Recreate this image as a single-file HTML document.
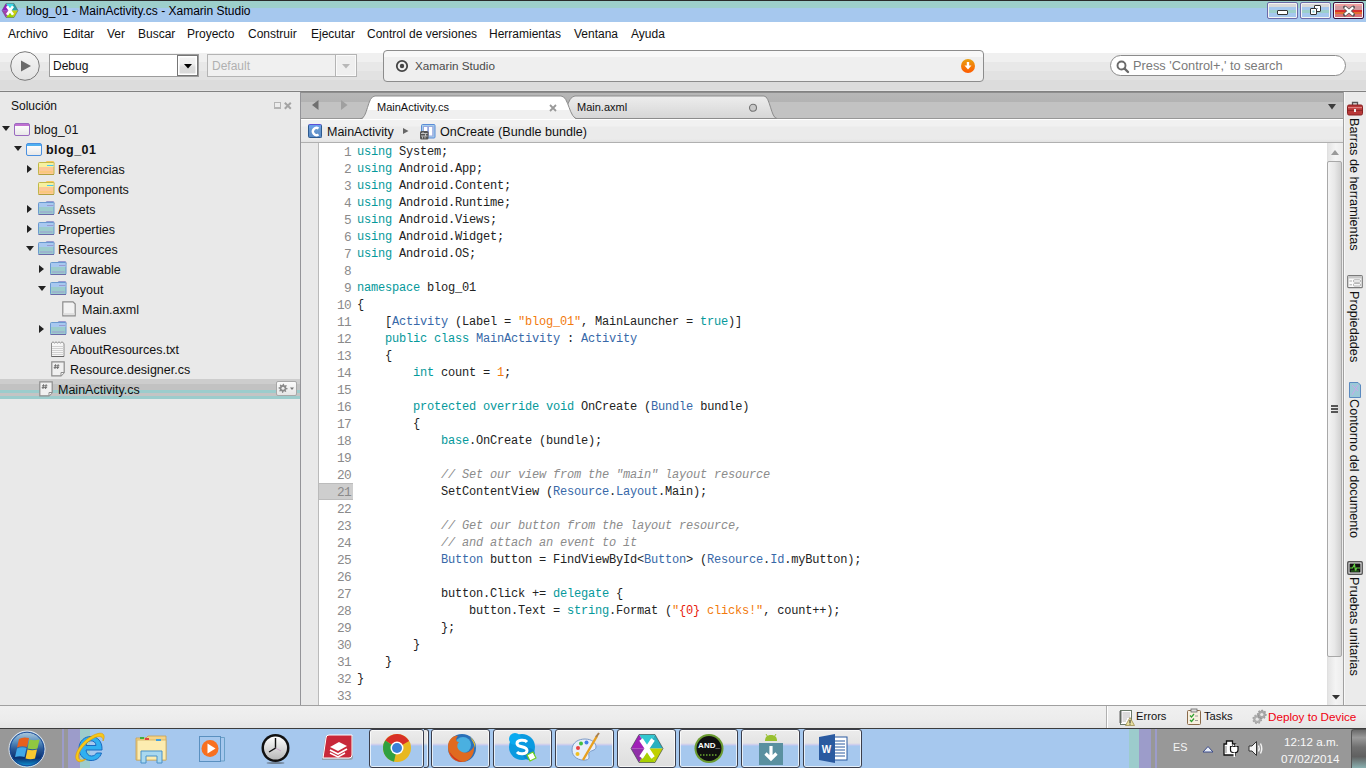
<!DOCTYPE html>
<html><head><meta charset="utf-8">
<style>
*{margin:0;padding:0;box-sizing:border-box}
html,body{width:1366px;height:768px;overflow:hidden;background:#e9e9e9;font-family:"Liberation Sans",sans-serif;font-size:12px;color:#111}
b{font-weight:normal}
.a{position:absolute}
.t{position:absolute;white-space:pre;line-height:1}
svg{position:absolute;overflow:visible}
/* title */
#title{left:0;top:0;width:1366px;height:22px;background:#a6c8ee;border-top:1px solid #2a2a2a}
.wb{position:absolute;top:1px;height:17px;border:1px solid #6b6aa8;border-radius:2px;overflow:hidden;box-shadow:inset 0 0 0 1px #f4f4f4}
/* menu */
#menu{left:0;top:22px;width:1366px;height:30px;background:#fff}
/* toolbar */
#tb{left:0;top:52px;width:1366px;height:40px;background:linear-gradient(#fff 0,#fff 1px,#f0f0f0 1px,#f0f0f0 9.5px,#e8e8e8 9.5px,#e8e8e8 19px,#e2e2e2 19px,#e2e2e2 28px,#dcdcdc 28px,#dcdcdc 38px,#e4e4e4 38px);border-bottom:1px solid #828282}
/* left panel */
#lp{left:0;top:92px;width:301px;height:613px;background:#e9e9e9;border-right:1px solid #949498}
#lp .t{font-size:12.5px}
/* editor */
#ed{left:301px;top:92px;width:1043px;height:613px;background:#fff;border-right:1px solid #a0a0a0}
#tabs{left:0;top:0;width:1042px;height:27px;background:linear-gradient(#b8b8b8 0,#b3b3b3 10px,#c2c2c2 10px,#c2c2c2 100%)}
#crumb{left:0;top:27px;width:1042px;height:24px;background:linear-gradient(#fff 0,#fff 1px,#f1f1f1 1px,#f1f1f1 7px,#ebebeb 8px,#ebebeb 20px,#e2e2e2 23px);border-bottom:1px solid #b0b0b0}
#gut{left:0;top:51px;width:18px;height:562px;background:#e9e9e9;border-right:1px solid #bababa}
.code{position:absolute;font-family:"Liberation Mono",monospace;font-size:12px;letter-spacing:-0.2px;line-height:17px;white-space:pre;color:#222}
.nums{position:absolute;text-align:right;font-family:"Liberation Mono",monospace;font-size:12.8px;letter-spacing:-0.68px;line-height:17px;white-space:pre;color:#8a8a8a}
.k{color:#05999b}.ty{color:#3768a8}.s{color:#f27a0c}.c{color:#8c8c8c;font-style:italic}.r{color:#e8200c}
/* right dock */
#rd{left:1344px;top:92px;width:22px;height:613px;background:#ebebeb}
.vt{position:absolute;white-space:pre;transform-origin:0 0;transform:rotate(90deg);font-size:12px;line-height:1;color:#111}
/* status */
#sb{left:0;top:705px;width:1366px;height:24px;background:linear-gradient(#f0f0f0,#ececec 60%,#e4e4e4);border-top:1px solid #a0a0a0;border-bottom:1px solid #3c3c3c}
/* taskbar */
#task{left:0;top:729px;width:1366px;height:39px;background:#a6c8ee}
.tbtn{position:absolute;top:0;width:59px;height:39px;border:1px solid #7d82a0;border-bottom:none;border-radius:3px 3px 0 0;background:linear-gradient(#e6eaf4,#bcd3ef 40%,#a6c8ee);box-shadow:inset 0 0 0 1px rgba(255,255,255,.5)}
</style></head><body>

<!-- TITLE BAR -->
<div id="title" class="a">
  <div class="a" style="left:0;top:0;width:1366px;height:7px;background:#9dcfcb"></div>
  <svg style="left:2px;top:2px" width="16" height="15" viewBox="0 0 16 15">
    <polygon points="4,0.5 12,0.5 8,7.5" fill="#38d8e8"/>
    <polygon points="12,0.5 16,7.5 8,7.5" fill="#28a0a8"/>
    <polygon points="16,7.5 12,14.5 8,7.5" fill="#c8d010"/>
    <polygon points="12,14.5 4,14.5 8,7.5" fill="#98d400"/>
    <polygon points="4,14.5 0,7.5 8,7.5" fill="#a040b0"/>
    <polygon points="0,7.5 4,0.5 8,7.5" fill="#9020c0"/>
    <polygon points="4,0.5 12,0.5 16,7.5 12,14.5 4,14.5 0,7.5" fill="none" stroke="#404040" stroke-width="0.7" opacity="0.55"/>
    <path d="M5,3.2 L11,11.8 M11,3.2 L5,11.8" stroke="#fff" stroke-width="2.6"/>
  </svg>
  <span class="t" style="left:26px;top:4px;font-size:12px;color:#000">blog_01 - MainActivity.cs - Xamarin Studio</span>
  <div class="wb" style="left:1267px;width:31px;background:linear-gradient(#d9d9d9 0,#d9d9d9 4px,#a6c8ee 4px,#a6c8ee 7px,#9dcfcb 7px,#9dcfcb 10px,#a6c8ee 10px)">
    <div class="a" style="left:9px;top:7px;width:11px;height:5px;background:#fff;border:1px solid #333;border-radius:1px"></div>
  </div>
  <div class="wb" style="left:1300px;width:31px;background:linear-gradient(#d9d9d9 0,#d9d9d9 4px,#a6c8ee 4px,#a6c8ee 7px,#9dcfcb 7px,#9dcfcb 10px,#a6c8ee 10px)">
    <div class="a" style="left:13px;top:2px;width:7px;height:7px;background:#fff;border:1px solid #333;border-radius:1px;box-shadow:inset 0 0 0 2px #fff,inset 0 0 0 3px #88aacc"></div>
    <div class="a" style="left:9px;top:5px;width:7px;height:7px;background:#fff;border:1px solid #333;border-radius:1px;box-shadow:inset 0 0 0 1.5px #fff,inset 0 0 0 3px #88ccd0"></div>
  </div>
  <div class="wb" style="left:1333px;width:31px;border-color:#3a1040;background:linear-gradient(#f0a0a0 0,#f0a0a0 3px,#d09aa0 3px,#d09aa0 7px,#d83030 7px,#d83030 9px,#e07030 9px,#e07030 11.5px,#d87078 11.5px)">
    <svg style="left:9px;top:3px" width="12" height="10" viewBox="0 0 12 10"><path d="M1.8,1.3 L10.2,8.7 M10.2,1.3 L1.8,8.7" stroke="#555" stroke-width="3.6" stroke-linecap="round"/><path d="M1.8,1.3 L10.2,8.7 M10.2,1.3 L1.8,8.7" stroke="#fff" stroke-width="2.2"/></svg>
  </div>
</div>

<!-- MENU -->
<div id="menu" class="a">
  <span class="t" style="left:8px;top:6px">Archivo</span>
  <span class="t" style="left:63px;top:6px">Editar</span>
  <span class="t" style="left:107px;top:6px">Ver</span>
  <span class="t" style="left:138px;top:6px">Buscar</span>
  <span class="t" style="left:187px;top:6px">Proyecto</span>
  <span class="t" style="left:248px;top:6px">Construir</span>
  <span class="t" style="left:311px;top:6px">Ejecutar</span>
  <span class="t" style="left:367px;top:6px">Control de versiones</span>
  <span class="t" style="left:489px;top:6px">Herramientas</span>
  <span class="t" style="left:574px;top:6px">Ventana</span>
  <span class="t" style="left:631px;top:6px">Ayuda</span>
</div>

<!-- TOOLBAR -->
<div id="tb" class="a">
  <svg style="left:10px;top:-1px" width="30" height="30" viewBox="0 0 30 30">
    <defs><linearGradient id="pg" x1="0" y1="0" x2="0" y2="1"><stop offset="0" stop-color="#f6f6f6"/><stop offset="1" stop-color="#e2e2e2"/></linearGradient></defs>
    <circle cx="15" cy="15" r="14.3" fill="url(#pg)" stroke="#7a7a7a" stroke-width="1"/>
    <polygon points="11,9.5 21,15 11,20.5" fill="#6a6a6a"/>
  </svg>
  <!-- Debug combo -->
  <div class="a" style="left:49px;top:2px;width:150px;height:23px;background:#fff;border:1px solid #9c9c9c"></div>
  <div class="a" style="left:177px;top:3px;width:21px;height:21px;background:linear-gradient(#f2f2f2,#f0f0f0 40%,#dcdcdc 60%,#d8d8d8);border:1.5px solid #767676;box-shadow:inset 0 0 0 1.5px #fff"></div>
  <svg style="left:184px;top:12px" width="8" height="5"><polygon points="0,0 8,0 4,4.5" fill="#000"/></svg>
  <span class="t" style="left:53px;top:8px;font-size:12px;color:#111">Debug</span>
  <!-- Default combo -->
  <div class="a" style="left:207px;top:2px;width:150px;height:23px;background:#f0f0f0;border:1px solid #b4b4b4"></div>
  <div class="a" style="left:335px;top:2px;width:22px;height:23px;background:#efefef;border:1px solid #b4b4b4;box-shadow:inset 0 0 0 1px #fafafa"></div>
  <svg style="left:342px;top:12px" width="8" height="5"><polygon points="0,0 8,0 4,4.5" fill="#b8b8b8"/></svg>
  <span class="t" style="left:212px;top:8px;font-size:12px;color:#b0b0b0">Default</span>
  <!-- status box -->
  <div class="a" style="left:383px;top:-2px;width:601px;height:32px;background:linear-gradient(#f8f8f8 0,#f8f8f8 6px,#efefef 6px,#efefef 100%);border:1px solid #8c8c8c;border-radius:4px"></div>
  <svg style="left:395px;top:7px" width="14" height="14" viewBox="0 0 14 14"><circle cx="7" cy="7" r="5.2" fill="none" stroke="#444" stroke-width="1.8"/><circle cx="7" cy="7" r="2.2" fill="#444"/></svg>
  <span class="t" style="left:415px;top:8px;font-size:11.7px;color:#4a4a4a">Xamarin Studio</span>
  <svg style="left:961px;top:7px" width="14" height="14" viewBox="0 0 14 14"><defs><linearGradient id="og" x1="0" y1="0" x2="0" y2="1"><stop offset="0" stop-color="#e8a010"/><stop offset="1" stop-color="#ff5a00"/></linearGradient></defs><circle cx="7" cy="7" r="7" fill="url(#og)"/><path d="M5.8,3 H8.2 V6.5 H10.5 L7,10.5 L3.5,6.5 H5.8 Z" fill="#fff"/></svg>
  <!-- search -->
  <div class="a" style="left:1110px;top:3px;width:236px;height:21px;background:#fff;border:1px solid #8c8c8c;border-radius:11px"></div>
  <svg style="left:1116px;top:8px" width="14" height="14" viewBox="0 0 14 14"><circle cx="5.5" cy="5.5" r="4" fill="none" stroke="#6a6a6a" stroke-width="1.9"/><path d="M8.5,8.5 L12,12" stroke="#6a6a6a" stroke-width="2.4" stroke-linecap="round"/></svg>
  <span class="t" style="left:1133px;top:8px;font-size:12.8px;color:#7a7a7a">Press 'Control+,' to search</span>
</div>

<!-- LEFT PANEL -->
<div id="lp" class="a">
  <span class="t" style="left:11px;top:8px;font-size:12px">Solución</span>
  <div class="a" style="left:274px;top:10px;width:7px;height:7px;border:1px solid #b4b4b4;border-bottom-width:2px;background:#ececec"></div>
  <svg style="left:284px;top:10px" width="8" height="8"><path d="M0.8,0.8 L6.8,6.8 M6.8,0.8 L0.8,6.8" stroke="#a4a4a4" stroke-width="2"/></svg>
<div class="a" style="left:0;top:287px;width:300px;height:20px;background:linear-gradient(#cdcdcd 0,#cdcdcd 5px,#c2c2c2 5px,#c2c2c2 11px,#9ccccc 11px,#9ccccc 14px,#c4c4c4 14px,#c4c4c4 17px,#9ccccc 17px,#9ccccc 20px)"></div>
<div class="a" style="left:276px;top:289px;width:21px;height:15px;background:linear-gradient(#fafafa,#e6e6e6);border:1px solid #a8a8a8;border-radius:2px"></div>
<svg style="left:278px;top:291px" width="18" height="11" viewBox="0 0 18 11"><path d="M9.6,5.3 L9.5,6.2 L8.0,6.6 L7.7,7.1 L8.3,8.6 L7.6,9.1 L6.3,8.3 L5.6,8.5 L5.0,9.9 L4.1,9.8 L3.7,8.3 L3.2,8.0 L1.7,8.6 L1.2,7.9 L2.0,6.6 L1.8,5.9 L0.4,5.3 L0.5,4.4 L2.0,4.0 L2.3,3.5 L1.7,2.0 L2.4,1.5 L3.7,2.3 L4.4,2.1 L5.0,0.7 L5.9,0.8 L6.3,2.3 L6.8,2.6 L8.3,2.0 L8.8,2.7 L8.0,4.0 L8.2,4.7 Z" fill="#8a8a8a"/><circle cx="5" cy="5.3" r="1.5" fill="#eee"/><polygon points="12,4.5 16,4.5 14,7" fill="#777"/></svg>
<svg style="left:2px;top:34px" width="8" height="5"><polygon points="0,0 8,0 4,5" fill="#222"/></svg>
<div class="a" style="left:14px;top:31px;width:16px;height:13px;border:1px solid #9a6ac0;border-radius:2px;background:linear-gradient(#c070d0 0,#c070d0 2px,#fdfdfd 2px,#e8e8e8 100%)"></div>
<span class="t" style="left:34px;top:32px;">blog_01</span>
<svg style="left:14px;top:54px" width="8" height="5"><polygon points="0,0 8,0 4,5" fill="#222"/></svg>
<div class="a" style="left:26px;top:51px;width:16px;height:13px;border:1px solid #4a90e0;border-radius:2px;background:linear-gradient(#50b0f0 0,#50b0f0 2px,#fdfdfd 2px,#e8e8e8 100%)"></div>
<span class="t" style="left:46px;top:52px;font-weight:bold;letter-spacing:0.45px;">blog_01</span>
<svg style="left:27px;top:73px" width="5" height="8"><polygon points="0,0 5,4 0,8" fill="#222"/></svg>
<svg style="left:38px;top:69px" width="17" height="15" viewBox="0 0 17 15"><rect x="8" y="0.5" width="8" height="3" rx="1" fill="#f0e898" stroke="#f8c860" stroke-width="1"/><rect x="0.5" y="1.5" width="15.5" height="12" rx="1" fill="#fcc898" stroke="#c0b848" stroke-width="1"/><rect x="1" y="2" width="14.5" height="4" fill="#f6f0a0"/><path d="M9,4.5 H15.5" stroke="#48c8f0" stroke-width="1"/><path d="M2,11 H14.5" stroke="#f8c860" stroke-width="1"/><path d="M0.5,13.5 H16" stroke="#b0a040" stroke-width="1"/></svg>
<span class="t" style="left:58px;top:72px;">Referencias</span>
<svg style="left:38px;top:89px" width="17" height="15" viewBox="0 0 17 15"><rect x="8" y="0.5" width="8" height="3" rx="1" fill="#f0e898" stroke="#f8c860" stroke-width="1"/><rect x="0.5" y="1.5" width="15.5" height="12" rx="1" fill="#fcc898" stroke="#c0b848" stroke-width="1"/><rect x="1" y="2" width="14.5" height="4" fill="#f6f0a0"/><path d="M9,4.5 H15.5" stroke="#48c8f0" stroke-width="1"/><path d="M2,11 H14.5" stroke="#f8c860" stroke-width="1"/><path d="M0.5,13.5 H16" stroke="#b0a040" stroke-width="1"/></svg>
<span class="t" style="left:58px;top:92px;">Components</span>
<svg style="left:27px;top:113px" width="5" height="8"><polygon points="0,0 5,4 0,8" fill="#222"/></svg>
<svg style="left:38px;top:109px" width="17" height="15" viewBox="0 0 17 15"><rect x="8" y="0.5" width="8" height="3" rx="1" fill="#a8c8f0" stroke="#9a9ad0" stroke-width="1"/><rect x="0.5" y="1.5" width="15.5" height="12" rx="1" fill="#9ccccc" stroke="#6a9ad0" stroke-width="1"/><rect x="1" y="2" width="14.5" height="4" fill="#a8c8f0"/><path d="M9,4.5 H15.5" stroke="#9a9ad0" stroke-width="1"/><path d="M2,11 H14.5" stroke="#9a9ad0" stroke-width="1"/><path d="M0.5,13.5 H16" stroke="#6a6aa8" stroke-width="1"/></svg>
<span class="t" style="left:58px;top:112px;">Assets</span>
<svg style="left:27px;top:133px" width="5" height="8"><polygon points="0,0 5,4 0,8" fill="#222"/></svg>
<svg style="left:38px;top:129px" width="17" height="15" viewBox="0 0 17 15"><rect x="8" y="0.5" width="8" height="3" rx="1" fill="#a8c8f0" stroke="#9a9ad0" stroke-width="1"/><rect x="0.5" y="1.5" width="15.5" height="12" rx="1" fill="#9ccccc" stroke="#6a9ad0" stroke-width="1"/><rect x="1" y="2" width="14.5" height="4" fill="#a8c8f0"/><path d="M9,4.5 H15.5" stroke="#9a9ad0" stroke-width="1"/><path d="M2,11 H14.5" stroke="#9a9ad0" stroke-width="1"/><path d="M0.5,13.5 H16" stroke="#6a6aa8" stroke-width="1"/></svg>
<span class="t" style="left:58px;top:132px;">Properties</span>
<svg style="left:26px;top:154px" width="8" height="5"><polygon points="0,0 8,0 4,5" fill="#222"/></svg>
<svg style="left:38px;top:149px" width="17" height="15" viewBox="0 0 17 15"><rect x="8" y="0.5" width="8" height="3" rx="1" fill="#a8c8f0" stroke="#9a9ad0" stroke-width="1"/><rect x="0.5" y="1.5" width="15.5" height="12" rx="1" fill="#9ccccc" stroke="#6a9ad0" stroke-width="1"/><rect x="1" y="2" width="14.5" height="4" fill="#a8c8f0"/><path d="M9,4.5 H15.5" stroke="#9a9ad0" stroke-width="1"/><path d="M2,11 H14.5" stroke="#9a9ad0" stroke-width="1"/><path d="M0.5,13.5 H16" stroke="#6a6aa8" stroke-width="1"/></svg>
<span class="t" style="left:58px;top:152px;">Resources</span>
<svg style="left:39px;top:173px" width="5" height="8"><polygon points="0,0 5,4 0,8" fill="#222"/></svg>
<svg style="left:50px;top:169px" width="17" height="15" viewBox="0 0 17 15"><rect x="8" y="0.5" width="8" height="3" rx="1" fill="#a8c8f0" stroke="#9a9ad0" stroke-width="1"/><rect x="0.5" y="1.5" width="15.5" height="12" rx="1" fill="#9ccccc" stroke="#6a9ad0" stroke-width="1"/><rect x="1" y="2" width="14.5" height="4" fill="#a8c8f0"/><path d="M9,4.5 H15.5" stroke="#9a9ad0" stroke-width="1"/><path d="M2,11 H14.5" stroke="#9a9ad0" stroke-width="1"/><path d="M0.5,13.5 H16" stroke="#6a6aa8" stroke-width="1"/></svg>
<span class="t" style="left:70px;top:172px;">drawable</span>
<svg style="left:38px;top:194px" width="8" height="5"><polygon points="0,0 8,0 4,5" fill="#222"/></svg>
<svg style="left:50px;top:189px" width="17" height="15" viewBox="0 0 17 15"><rect x="8" y="0.5" width="8" height="3" rx="1" fill="#a8c8f0" stroke="#9a9ad0" stroke-width="1"/><rect x="0.5" y="1.5" width="15.5" height="12" rx="1" fill="#9ccccc" stroke="#6a9ad0" stroke-width="1"/><rect x="1" y="2" width="14.5" height="4" fill="#a8c8f0"/><path d="M9,4.5 H15.5" stroke="#9a9ad0" stroke-width="1"/><path d="M2,11 H14.5" stroke="#9a9ad0" stroke-width="1"/><path d="M0.5,13.5 H16" stroke="#6a6aa8" stroke-width="1"/></svg>
<span class="t" style="left:70px;top:192px;">layout</span>
<svg style="left:62px;top:209px" width="15" height="16" viewBox="0 0 15 16"><path d="M0.8,0.8 H11 L13.2,3 V14.8 H0.8 Z" fill="#f2f2f2" stroke="#8c8c8c" stroke-width="1.2"/><path d="M1.5,13 H12.5" stroke="#e0e0e0" stroke-width="2"/></svg>
<span class="t" style="left:82px;top:212px;">Main.axml</span>
<svg style="left:39px;top:233px" width="5" height="8"><polygon points="0,0 5,4 0,8" fill="#222"/></svg>
<svg style="left:50px;top:229px" width="17" height="15" viewBox="0 0 17 15"><rect x="8" y="0.5" width="8" height="3" rx="1" fill="#a8c8f0" stroke="#9a9ad0" stroke-width="1"/><rect x="0.5" y="1.5" width="15.5" height="12" rx="1" fill="#9ccccc" stroke="#6a9ad0" stroke-width="1"/><rect x="1" y="2" width="14.5" height="4" fill="#a8c8f0"/><path d="M9,4.5 H15.5" stroke="#9a9ad0" stroke-width="1"/><path d="M2,11 H14.5" stroke="#9a9ad0" stroke-width="1"/><path d="M0.5,13.5 H16" stroke="#6a6aa8" stroke-width="1"/></svg>
<span class="t" style="left:70px;top:232px;">values</span>
<svg style="left:51px;top:249px" width="14" height="16" viewBox="0 0 14 16"><path d="M0.5,2 L2,0.8 L3.5,2 L5,0.8 L6.5,2 L8,0.8 L9.5,2 L11,0.8 L13,2.5 V15.5 H0.5 Z" fill="#f6f6f6" stroke="#8c8c8c" stroke-width="1"/><path d="M1,5.5 H12.5 M1,7.5 H12.5 M1,9.5 H12.5 M1,11.5 H12.5 M1,13.5 H12.5" stroke="#d0d0d0" stroke-width="1"/><path d="M0.5,15.5 H13" stroke="#666" stroke-width="1"/></svg>
<span class="t" style="left:70px;top:252px;">AboutResources.txt</span>
<svg style="left:51px;top:269px" width="15" height="16" viewBox="0 0 15 16"><path d="M0.8,0.8 H13.2 V11.5 L10,14.8 H0.8 Z" fill="#f0f0f0" stroke="#8c8c8c" stroke-width="1.2"/><path d="M10,14.5 V11.5 H13" fill="#fff" stroke="#8c8c8c" stroke-width="1"/><path d="M4.6,3.2 L3.9,8 M7.2,3.2 L6.5,8 M3,4.8 H8.4 M2.7,6.6 H8.1" stroke="#6a6a6a" stroke-width="0.9"/></svg>
<span class="t" style="left:70px;top:272px;">Resource.designer.cs</span>
<svg style="left:39px;top:289px" width="15" height="16" viewBox="0 0 15 16"><path d="M0.8,0.8 H13.2 V11.5 L10,14.8 H0.8 Z" fill="#f0f0f0" stroke="#8c8c8c" stroke-width="1.2"/><path d="M10,14.5 V11.5 H13" fill="#fff" stroke="#8c8c8c" stroke-width="1"/><path d="M4.6,3.2 L3.9,8 M7.2,3.2 L6.5,8 M3,4.8 H8.4 M2.7,6.6 H8.1" stroke="#6a6a6a" stroke-width="0.9"/></svg>
<span class="t" style="left:58px;top:292px;">MainActivity.cs</span>
</div>

<!-- EDITOR -->
<div id="ed" class="a">
  <div id="tabs" class="a">

    <div class="a" style="left:0;top:0;width:1042px;height:1px;background:#8e8e8e"></div>
    <svg style="left:11px;top:8px" width="7" height="10"><polygon points="6.5,0 6.5,10 0,5" fill="#707070"/></svg>
    <svg style="left:40px;top:8px" width="7" height="10"><polygon points="0,0 0,10 6.5,5" fill="#a0a0a0"/></svg>
    <div class="a" style="left:0;top:26px;width:1042px;height:1px;background:#979797"></div>
    <svg style="left:0;top:0" width="1042" height="27" viewBox="0 0 1042 27">
      <defs>
        <linearGradient id="tgi" x1="0" y1="0" x2="0" y2="1"><stop offset="0" stop-color="#ededed"/><stop offset="1" stop-color="#d6d6d6"/></linearGradient>
        <linearGradient id="tga" x1="0" y1="0" x2="0" y2="1"><stop offset="0" stop-color="#ffffff"/><stop offset="0.62" stop-color="#ffffff"/><stop offset="0.62" stop-color="#f0f0f0"/><stop offset="1" stop-color="#f0f0f0"/></linearGradient>
      </defs>
      <path d="M258,26.5 C265,26.5 266,4 274,4 L463,4 C469,4 470,26.5 476,26.5 Z" fill="url(#tgi)" stroke="#8c8c8c" stroke-width="1"/>
      <path d="M59,27 C67,27 66,4 74,4 L260,4 C268,4 268,27 277,27 Z" fill="url(#tga)" stroke="#8c8c8c" stroke-width="1"/>
      <rect x="62" y="26" width="212" height="2" fill="#f0f0f0"/>
    </svg>
    <span class="t" style="left:76px;top:10px;font-size:11px;color:#111">MainActivity.cs</span>
    <svg style="left:248px;top:12px" width="8" height="8"><path d="M1,1 L7,7 M7,1 L1,7" stroke="#999" stroke-width="1.8"/></svg>
    <span class="t" style="left:276px;top:10px;font-size:11px;color:#111">Main.axml</span>
    <svg style="left:447px;top:11px" width="10" height="10"><circle cx="5" cy="4.8" r="3.5" fill="#c8c8c8" stroke="#747474" stroke-width="1.1"/></svg>
    <svg style="left:1027px;top:12px" width="8" height="6"><polygon points="0,0 8,0 4,5.5" fill="#3c3c3c"/></svg>

  </div>
  <div id="crumb" class="a">
    <div class="a" style="left:7px;top:5px;width:14px;height:14px;background:linear-gradient(#6a9ee8 0,#6a9ee8 3px,#6a9ad0 3px,#5a8cc8);border:1px solid #2d5a90;border-top-color:#5a50d8;border-radius:2px"></div>
    <svg style="left:10px;top:8px" width="9" height="9" viewBox="0 0 9 9"><path d="M7.5,1.5 A3.6,3.6 0 1 0 7.5,7.5" fill="none" stroke="#fff" stroke-width="2.3"/></svg>
    <span class="t" style="left:26px;top:7px;font-size:12.5px">MainActivity</span>
    <svg style="left:102px;top:9px" width="6" height="7"><polygon points="0,0 5.5,3 0,6" fill="#666"/></svg>
    <svg style="left:119px;top:5px" width="16" height="16" viewBox="0 0 16 16">
      <rect x="1.5" y="0.5" width="13.5" height="13.5" rx="1" fill="#a8d0e8" stroke="#5a8ad8" stroke-width="1"/>
      <rect x="3" y="2" width="10.5" height="10.5" fill="#98a8e0"/>
      <rect x="4" y="3" width="3.2" height="8.5" fill="#fff"/><rect x="9" y="3" width="3.2" height="8.5" fill="#fff"/>
      <rect x="0" y="7" width="8.5" height="8.5" rx="1.5" fill="#555"/>
      <path d="M1,9.5 H7.5 M1,12 H7.5 M3,8 V9.5 M5.5,10 V12 M2.5,12.5 V14.5 M5,12.5 V14.5" stroke="#d8d8d8" stroke-width="0.8"/>
    </svg>
    <span class="t" style="left:139px;top:7px;font-size:12.6px">OnCreate (Bundle bundle)</span>
  </div>
  <div id="gut" class="a"></div>
  <div class="a" style="left:18px;top:391px;width:34px;height:17px;background:#cecece;border-top:1px solid #bcbcbc;border-bottom:1px solid #bcbcbc"></div>
  <div class="nums" style="left:18px;top:52px;width:32px">1
2
3
4
5
6
7
8
9
10
11
12
13
14
15
16
17
18
19
20
21
22
23
24
25
26
27
28
29
30
31
32
33</div>
  <div class="code" style="left:56px;top:52px"><b class="k">using</b> System;
<b class="k">using</b> Android.App;
<b class="k">using</b> Android.Content;
<b class="k">using</b> Android.Runtime;
<b class="k">using</b> Android.Views;
<b class="k">using</b> Android.Widget;
<b class="k">using</b> Android.OS;

<b class="k">namespace</b> blog_01
{
    [<b class="ty">Activity</b> (Label = <b class="s">"blog_01"</b>, MainLauncher = <b class="k">true</b>)]
    <b class="k">public</b> <b class="k">class</b> <b class="ty">MainActivity</b> : <b class="ty">Activity</b>
    {
        <b class="k">int</b> count = <b class="s">1</b>;

        <b class="k">protected</b> <b class="k">override</b> <b class="k">void</b> OnCreate (<b class="ty">Bundle</b> bundle)
        {
            <b class="k">base</b>.OnCreate (bundle);

            <b class="c">// Set our view from the "main" layout resource</b>
            SetContentView (<b class="ty">Resource</b>.<b class="ty">Layout</b>.Main);

            <b class="c">// Get our button from the layout resource,</b>
            <b class="c">// and attach an event to it</b>
            <b class="ty">Button</b> button = FindViewById&lt;<b class="ty">Button</b>&gt; (<b class="ty">Resource</b>.<b class="ty">Id</b>.myButton);

            button.Click += <b class="k">delegate</b> {
                button.Text = <b class="k">string</b>.Format (<b class="s">"</b><b class="r">{0}</b><b class="s"> clicks!"</b>, count++);
            };
        }
    }
}
</div>
  <!-- scrollbar -->

  <div class="a" style="left:1026px;top:51px;width:16px;height:562px;background:linear-gradient(90deg,#e4e4e4,#f4f4f4 50%,#ececec);border-left:1px solid #e0e0e0"></div>
  <svg style="left:1030px;top:58px" width="8" height="5"><polygon points="0,5 8,5 4,0" fill="#9a9a9a"/></svg>
  <div class="a" style="left:1026px;top:69px;width:15px;height:496px;background:linear-gradient(90deg,#f4f4f4,#e8e8e8 50%,#d0d0d0);border:1px solid #a8a8a8;border-radius:2px"></div>
  <div class="a" style="left:1030px;top:313px;width:7px;height:1.5px;background:#555"></div>
  <div class="a" style="left:1030px;top:316px;width:7px;height:1.5px;background:#555"></div>
  <div class="a" style="left:1030px;top:319px;width:7px;height:1.5px;background:#555"></div>
  <svg style="left:1031px;top:603px" width="8" height="5"><polygon points="0,0 8,0 4,4.5" fill="#333"/></svg>

</div>

<!-- RIGHT DOCK -->
<div id="rd" class="a">

  <div class="a" style="left:0;top:0;width:1px;height:613px;background:#f8f8f8"></div>
  <svg style="left:3px;top:9px" width="16" height="15" viewBox="0 0 16 15"><path d="M5.5,4 V1.5 H10.5 V4" fill="none" stroke="#555" stroke-width="1.3"/><rect x="0.5" y="4" width="15" height="10" rx="1.5" fill="#b83838" stroke="#882020"/><rect x="1" y="6" width="14" height="1.2" fill="#e08080"/><rect x="1" y="9" width="14" height="1" fill="#902828"/><rect x="7" y="8" width="2" height="3" fill="#eee"/></svg>
  <span class="vt" style="left:15.8px;top:26px;font-size:12.7px">Barras de herramientas</span>
  <svg style="left:3px;top:183px" width="16" height="14" viewBox="0 0 16 14"><rect x="0.7" y="0.7" width="14.6" height="12" rx="1" fill="#fafafa" stroke="#7a7a7a" stroke-width="1.2"/><rect x="1" y="1" width="14" height="2.5" fill="#c8c8c8"/><rect x="6.5" y="4.8" width="7" height="2.4" rx="1" fill="#fff" stroke="#999" stroke-width="0.8"/><rect x="6.5" y="8.6" width="7" height="2.4" rx="1" fill="#fff" stroke="#999" stroke-width="0.8"/><path d="M2.5,6 H5 M2.5,9.8 H5" stroke="#aaa" stroke-width="1"/></svg>
  <span class="vt" style="left:15.8px;top:198.5px;font-size:12.7px">Propiedades</span>
  <svg style="left:5px;top:290px" width="12" height="16" viewBox="0 0 12 16"><path d="M0.5,0.5 H9 L11.5,3 V15.5 H0.5 Z" fill="#9cc8d8" stroke="#5a8ac0"/><path d="M3,3 L9,9 M3,13 L9,3" stroke="#c8a8e8" stroke-width="1"/></svg>
  <span class="vt" style="left:15.8px;top:307px;font-size:12.7px">Contorno del documento</span>
  <svg style="left:3px;top:469px" width="16" height="14" viewBox="0 0 16 14"><rect x="0.8" y="0.8" width="14.4" height="12.4" rx="1" fill="#fff" stroke="#555" stroke-width="1.5"/><rect x="2.5" y="2.5" width="11" height="9" fill="#111"/><path d="M3,7 H5.5 L7.5,3.5 L8.5,10 L9.5,7 H13" fill="none" stroke="#60d040" stroke-width="1.2"/><path d="M4,10 H12" stroke="#308020" stroke-width="1"/></svg>
  <span class="vt" style="left:15.8px;top:485px;font-size:12.7px">Pruebas unitarias</span>

</div>

<!-- STATUS -->
<div id="sb" class="a">

  <div class="a" style="left:1106px;top:0;width:1px;height:22px;background:#b0b0b0"></div>
  <div class="a" style="left:1107px;top:0;width:1px;height:22px;background:#fff"></div>
  <svg style="left:1118px;top:3px" width="17" height="17" viewBox="0 0 17 17"><rect x="2.5" y="1.5" width="11" height="14" fill="#fdfdfd" stroke="#6a7a6a"/><path d="M4.5,4 H12 M4.5,6 H12 M4.5,8 H12 M4.5,10 H9 M4.5,12 H8" stroke="#b8b8b8" stroke-width="1"/><path d="M1,3 H4 M1,5 H4 M1,7 H4 M1,9 H4 M1,11 H4 M1,13 H4" stroke="#555" stroke-width="0.9"/><polygon points="12,8.5 16.5,16.5 7.5,16.5" fill="#e8e0a0" stroke="#a09050" stroke-width="0.8"/><rect x="11.5" y="11" width="1" height="3" fill="#222"/><rect x="11.5" y="14.6" width="1" height="1" fill="#222"/></svg>
  <span class="t" style="left:1136px;top:5px;font-size:11.2px">Errors</span>
  <svg style="left:1187px;top:2px" width="14" height="17" viewBox="0 0 14 17"><rect x="0.5" y="2.5" width="13" height="14" rx="1" fill="#f8f0e0" stroke="#8a6a4a"/><rect x="4" y="1" width="6" height="3" fill="#ddd" stroke="#666" stroke-width="0.8"/><path d="M3,7.5 L4.5,9 L7,6 M3,12 L4.5,13.5 L7,10.5" fill="none" stroke="#30a030" stroke-width="1.2"/><path d="M8,8 H11 M8,12.5 H11" stroke="#888" stroke-width="0.8"/></svg>
  <span class="t" style="left:1204px;top:5px;font-size:11.2px">Tasks</span>
  <svg style="left:1252px;top:3px" width="16" height="16" viewBox="0 0 16 16"><path d="M9.7,11.1 L9.4,12.0 L8.0,12.1 L7.6,12.6 L7.7,14.0 L6.9,14.5 L5.9,13.5 L5.2,13.6 L4.3,14.7 L3.4,14.4 L3.3,13.0 L2.8,12.6 L1.4,12.7 L0.9,11.9 L1.9,10.9 L1.8,10.2 L0.7,9.3 L1.0,8.4 L2.4,8.3 L2.8,7.8 L2.7,6.4 L3.5,5.9 L4.5,6.9 L5.2,6.8 L6.1,5.7 L7.0,6.0 L7.1,7.4 L7.6,7.8 L9.0,7.7 L9.5,8.5 L8.5,9.5 L8.6,10.2 Z" fill="#b0b0b0" stroke="#909090" stroke-width="0.6"/><circle cx="5.2" cy="10.2" r="1.6" fill="#e8e8e8"/><path d="M14.4,5.5 L14.3,6.4 L12.9,6.8 L12.6,7.4 L13.1,8.8 L12.4,9.3 L11.1,8.6 L10.5,8.8 L9.8,10.1 L8.9,10.0 L8.5,8.6 L7.9,8.3 L6.5,8.8 L6.0,8.1 L6.7,6.8 L6.5,6.2 L5.2,5.5 L5.3,4.6 L6.7,4.2 L7.0,3.6 L6.5,2.2 L7.2,1.7 L8.5,2.4 L9.1,2.2 L9.8,0.9 L10.7,1.0 L11.1,2.4 L11.7,2.7 L13.1,2.2 L13.6,2.9 L12.9,4.2 L13.1,4.8 Z" fill="#a8a8a8" stroke="#888" stroke-width="0.6"/><circle cx="9.8" cy="5.5" r="1.6" fill="#e8e8e8"/></svg>
  <span class="t" style="left:1268px;top:5px;font-size:11.7px;color:#f00010">Deploy to Device</span>

</div>

<!-- TASKBAR -->
<div id="task" class="a">
<div class="a" style="left:0;top:0;width:62px;height:39px;background:#989898"></div>
<div class="a" style="left:62px;top:0;width:2px;height:39px;background:#9c9cca"></div>
<div class="a" style="left:64px;top:0;width:4px;height:39px;background:#989898"></div>
<div class="a" style="left:68px;top:0;width:12px;height:39px;background:#9c9cca"></div>
<div class="a" style="left:80px;top:0;width:10px;height:39px;background:#9ccccc"></div>
<div class="a" style="left:1129px;top:0;width:10px;height:39px;background:#9ccccc"></div>
<div class="a" style="left:1139px;top:0;width:12px;height:39px;background:#9c9cca"></div>
<div class="a" style="left:1151px;top:0;width:215px;height:39px;background:#989898"></div>
<div class="a" style="left:1155px;top:0;width:2px;height:39px;background:#9c9cca"></div>
<div class="a" style="left:1351px;top:0;width:15px;height:39px;background:linear-gradient(#6a6a6a,#9a9a9a 20%,#707070 45%,#606060 70%,#8ab0b0 100%);border-left:1px solid #555;border-top:1px solid #555;border-radius:3px 0 0 0"></div>
<svg style="left:8px;top:1px" width="38" height="38" viewBox="0 0 38 38">
 <defs><linearGradient id="orb" x1="0" y1="0" x2="0" y2="1"><stop offset="0" stop-color="#b8d0e0"/><stop offset="0.3" stop-color="#5a90c0"/><stop offset="0.5" stop-color="#2a5a98"/><stop offset="0.75" stop-color="#0a3070"/><stop offset="1" stop-color="#10a0e0"/></linearGradient></defs>
 <circle cx="19" cy="19" r="18" fill="url(#orb)" stroke="#e0e8f0" stroke-width="1"/>
 <circle cx="19" cy="19" r="16.8" fill="none" stroke="#1a4a98" stroke-width="1"/>
 <path d="M11,9 Q15,6.5 21,8 L19,17 Q14,15.5 9,17.5 Z" fill="#e8601c"/>
 <path d="M21.5,9.5 Q26,11 31.5,9.5 L29.5,18.5 Q25,20 19.5,18.5 Z" fill="#90c840"/>
 <path d="M9,18.5 Q14,16.5 18.5,18 L16.5,27 Q12,25.5 7,27 Z" fill="#40a8e8"/>
 <path d="M19.5,19.5 Q24,21 29,19.5 L27,28.5 Q22.5,30 17.5,28.5 Z" fill="#f8c830"/>
</svg>
<svg style="left:74px;top:3px" width="31" height="31" viewBox="0 0 31 31">
 <path d="M5,16.5 C5,9 10.5,4.5 17,4.5 C24,4.5 28,10 28,16.5 V18 H12 C12.5,22 14.5,24 17.5,24 C20,24 21.5,22.8 22.5,21 H27.5 C26,26 22,28.5 17,28.5 C10,28.5 5,23.5 5,16.5 Z M12,13.5 H22 C21.8,10.5 19.8,8.8 17,8.8 C14.2,8.8 12.3,10.5 12,13.5 Z" fill="#30b0f0" stroke="#1a6ac0" stroke-width="1"/>
 <path d="M2.5,28 C-1.5,22 10,5 24,1.5 C30,0 31.5,4 29,9 C29.5,4.5 26,3.5 21,5.5 C11,10 2.5,21.5 5,26.5 C6,28.5 9,28.5 12,27 C8,30.5 4,30.5 2.5,28 Z" fill="#f8c818" stroke="#e09800" stroke-width="0.6"/>
</svg>
<svg style="left:135px;top:5px" width="33" height="30" viewBox="0 0 33 30">
 <path d="M1,4 H11 L13,2 H31 V26 H1 Z" fill="#f4d488" stroke="#c8a050" stroke-width="0.8"/>
 <rect x="2" y="6" width="29" height="20" fill="#fcecb0" stroke="#d0b060" stroke-width="0.8"/>
 <rect x="5" y="3" width="4" height="2" fill="#40b040"/><rect x="10" y="4" width="4" height="2" fill="#e04040"/><rect x="21" y="5" width="5" height="2" fill="#40a0e0"/>
 <path d="M6,17 H27 V29 H22 V22 H11 V29 H6 Z" fill="#a8d8f0" stroke="#4890c8" stroke-width="1"/>
</svg>
<svg style="left:198px;top:5px" width="30" height="30" viewBox="0 0 30 30">
 <path d="M23,3.5 H26.5 V27 H23" fill="none" stroke="#6aa0c8" stroke-width="1"/>
 <rect x="1.5" y="2.5" width="21" height="25" fill="none" stroke="#5a90c0" stroke-width="1"/>
 <circle cx="12" cy="14.5" r="8.5" fill="#f87020"/><polygon points="9.5,9.5 17.5,14.5 9.5,19.5" fill="#fff"/>
</svg>
<svg style="left:260px;top:4px" width="31" height="31" viewBox="0 0 31 31">
 <defs><linearGradient id="clk" x1="0" y1="0" x2="0" y2="1"><stop offset="0" stop-color="#ffffff"/><stop offset="1" stop-color="#b8b8b8"/></linearGradient></defs>
 <circle cx="15.5" cy="15" r="14" fill="#111"/><circle cx="15.5" cy="15" r="11.5" fill="url(#clk)"/>
 <path d="M15.5,5 V15 L9,19" fill="none" stroke="#111" stroke-width="1.4"/><path d="M15.5,15 L21,18" stroke="#c8a0c8" stroke-width="0.8"/>
 <ellipse cx="15.5" cy="30" rx="9" ry="1" fill="#333" opacity=".5"/>
</svg>
<svg style="left:321px;top:5px" width="33" height="30" viewBox="0 0 33 30">
 <path d="M4,5 Q4,2 7,2 H32 V23 Q32,26 29,26 H1 Z" fill="#888" opacity=".6"/>
 <path d="M5,4 Q5,1 8,1 H31 V21 Q31,24 28,24 H2 Z" fill="#c8283a" stroke="#fff" stroke-width="1"/>
 <path d="M9,13 L18,8 L26,12 L17,17 Z" fill="#fff"/><path d="M9,16 L17,20 L26,15" fill="none" stroke="#fff" stroke-width="1.8"/><path d="M9,19 L17,23 L24,19" fill="none" stroke="#fff" stroke-width="1.5"/>
</svg>
<div class="a" style="left:369px;top:0;width:55px;height:39px;border:1px solid #3c3f4c;border-radius:3px;background:linear-gradient(#ececec 0,#e4e4e4 13px,#d8d8e8 14px,#c8c8f0 15px,#a6c8ee 16px,#a6c8ee 100%);box-shadow:inset 0 0 0 1px rgba(255,255,255,.7)"></div>
<div class="a" style="left:424px;top:0;width:5px;height:39px;border:1px solid #3c3f4c;border-left:none;border-radius:0 3px 3px 0;background:linear-gradient(#e8e8e8 0,#e4e4e4 13px,#a6c8ee 16px);box-shadow:inset -1px 0 0 rgba(255,255,255,.7)"></div>
<div class="a" style="left:431px;top:0;width:59px;height:39px;border:1px solid #3c3f4c;border-radius:3px;background:linear-gradient(#ececec 0,#e4e4e4 13px,#d8d8e8 14px,#c8c8f0 15px,#a6c8ee 16px,#a6c8ee 100%);box-shadow:inset 0 0 0 1px rgba(255,255,255,.7)"></div>
<div class="a" style="left:493px;top:0;width:59px;height:39px;border:1px solid #3c3f4c;border-radius:3px;background:linear-gradient(#ececec 0,#e4e4e4 13px,#d8d8e8 14px,#c8c8f0 15px,#a6c8ee 16px,#a6c8ee 100%);box-shadow:inset 0 0 0 1px rgba(255,255,255,.7)"></div>
<div class="a" style="left:555px;top:0;width:59px;height:39px;border:1px solid #3c3f4c;border-radius:3px;background:linear-gradient(#ececec 0,#e4e4e4 13px,#d8d8e8 14px,#c8c8f0 15px,#a6c8ee 16px,#a6c8ee 100%);box-shadow:inset 0 0 0 1px rgba(255,255,255,.7)"></div>
<div class="a" style="left:617px;top:0;width:59px;height:39px;border:1px solid #3c3f4c;border-radius:3px;background:linear-gradient(#f2f2f2 0,#e8e8e8 14px,#dedede 100%);box-shadow:inset 0 0 0 1px rgba(255,255,255,.7)"></div>
<div class="a" style="left:679px;top:0;width:59px;height:39px;border:1px solid #3c3f4c;border-radius:3px;background:linear-gradient(#ececec 0,#e4e4e4 13px,#d8d8e8 14px,#c8c8f0 15px,#a6c8ee 16px,#a6c8ee 100%);box-shadow:inset 0 0 0 1px rgba(255,255,255,.7)"></div>
<div class="a" style="left:741px;top:0;width:59px;height:39px;border:1px solid #3c3f4c;border-radius:3px;background:linear-gradient(#ececec 0,#e4e4e4 13px,#d8d8e8 14px,#c8c8f0 15px,#a6c8ee 16px,#a6c8ee 100%);box-shadow:inset 0 0 0 1px rgba(255,255,255,.7)"></div>
<div class="a" style="left:803px;top:0;width:59px;height:39px;border:1px solid #3c3f4c;border-radius:3px;background:linear-gradient(#ececec 0,#e4e4e4 13px,#d8d8e8 14px,#c8c8f0 15px,#a6c8ee 16px,#a6c8ee 100%);box-shadow:inset 0 0 0 1px rgba(255,255,255,.7)"></div>
<svg style="left:382px;top:4px" width="30" height="30" viewBox="0 0 30 30">
 <circle cx="15" cy="15" r="14" fill="#e8b820"/>
 <path d="M15,15 L3.2,7.5 A14,14 0 0 1 27.1,8 Z" fill="#d83028"/>
 <path d="M15,15 L3.2,7.5 A14,14 0 0 0 12,28.7 Z" fill="#30a040"/>
 <circle cx="15" cy="15" r="6.5" fill="#fff"/><circle cx="15" cy="15" r="5" fill="#3a80d8"/>
</svg>
<svg style="left:446px;top:4px" width="31" height="31" viewBox="0 0 31 31">
 <circle cx="16" cy="15" r="14" fill="#2a70b8"/>
 <circle cx="17" cy="12" r="8" fill="#4ab0e0"/>
 <path d="M2,14 C2,5 9,2 12,3 C9,6 10,9 13,9 C10,12 11,17 16,19 C21,21 26,18 28,13 C29,22 23,29 16,29 C8,29 2,23 2,14 Z" fill="#e06a20"/>
 <path d="M3,18 C5,25 11,29 17,29 C11,27 6,23 3,18 Z" fill="#d03020"/>
 <path d="M24,4 C28,7 30,11 29,15 C28,10 26,7 24,4 Z" fill="#f8c020"/>
</svg>
<svg style="left:508px;top:4px" width="30" height="31" viewBox="0 0 30 31">
 <circle cx="14" cy="14" r="13" fill="#0a9ae0"/><circle cx="7" cy="6" r="6" fill="#0aaaf0"/><circle cx="21" cy="21" r="6" fill="#0a8ad0"/>
 <path d="M19,9 C17,6.5 9,6.5 9,10.5 C9,15 19,12.5 19,17.5 C19,21.5 11,21.5 9,19" fill="none" stroke="#fff" stroke-width="3"/>
 <path d="M19,22 L25,19 L28,25 L22,28 Z" fill="#fff" stroke="#70d020" stroke-width="1.2" stroke-linejoin="round"/>
</svg>
<svg style="left:569px;top:4px" width="32" height="30" viewBox="0 0 32 30">
 <path d="M3,17 C3,9 10,6 16,6 C23,6 27,10 27,14 C27,18 21,17 20,20 C19,23 22,26 17,27 C10,28 3,24 3,17 Z" fill="#e8eef8" stroke="#7a9ac8" stroke-width="1"/>
 <circle cx="9" cy="15" r="2" fill="#e84040"/><circle cx="12" cy="10.5" r="2" fill="#40c040"/><circle cx="17.5" cy="9.5" r="2" fill="#4080e8"/><circle cx="8.5" cy="21" r="2" fill="#f0c020"/>
 <path d="M14,27 L28,3" stroke="#e8a020" stroke-width="2.4"/><path d="M27,4 L30,0" stroke="#a88050" stroke-width="2"/>
</svg>
<svg style="left:631px;top:5px" width="32" height="30" viewBox="0 0 32 30">
 <polygon points="8,0.5 24,0.5 16,14.5" fill="#30c8d0"/>
 <polygon points="24,0.5 32,14.5 16,14.5" fill="#28b0c0"/>
 <polygon points="32,14.5 24,28.5 16,14.5" fill="#c0d000"/>
 <polygon points="24,28.5 8,28.5 16,14.5" fill="#a8d000"/>
 <polygon points="8,28.5 0,14.5 16,14.5" fill="#9030a8"/>
 <polygon points="0,14.5 8,0.5 16,14.5" fill="#a020b8"/>
 <polygon points="8,0.5 24,0.5 32,14.5 24,28.5 8,28.5 0,14.5" fill="none" stroke="#304040" stroke-width="1" opacity="0.6"/>
 <path d="M10,5.5 L22,23.5 M22,5.5 L10,23.5" stroke="#fff" stroke-width="4.2"/>
</svg>
<svg style="left:693px;top:4px" width="32" height="31" viewBox="0 0 32 31">
 <circle cx="16" cy="15.5" r="14.5" fill="#6a9a30"/><circle cx="16" cy="15.5" r="12.5" fill="#111"/>
 <text x="16" y="15" font-family="Liberation Sans" font-weight="bold" font-size="8" fill="#fff" text-anchor="middle">AND_</text>
 <path d="M7,22 H25" stroke="#6aa830" stroke-width="1.5" stroke-dasharray="1.5 1.5"/>
</svg>
<svg style="left:757px;top:3px" width="28" height="34" viewBox="0 0 28 34">
 <path d="M8,9 C8,5 10,3 14,3 C18,3 20,5 20,9 Z" fill="#98c030"/><path d="M9,2 L10.5,4.5 M19,2 L17.5,4.5" stroke="#98c030" stroke-width="1"/>
 <rect x="2" y="11" width="24" height="22" fill="#5a90a0"/>
 <path d="M14,14 V27 M8.5,21.5 L14,27 L19.5,21.5" fill="none" stroke="#fff" stroke-width="3.2"/>
</svg>
<svg style="left:818px;top:4px" width="30" height="31" viewBox="0 0 30 31">
 <rect x="11" y="4" width="18" height="23" fill="#fff" stroke="#2a5aa0" stroke-width="1"/>
 <path d="M14,8 H27 M14,11 H27 M14,14 H27 M14,17 H27 M14,20 H27 M14,23 H27" stroke="#2a5aa0" stroke-width="1"/>
 <polygon points="1,4 17,1 17,30 1,27" fill="#2a5aa0"/>
 <text x="8.5" y="20" font-family="Liberation Sans" font-weight="bold" font-size="10" fill="#fff" text-anchor="middle">W</text>
</svg>
<span class="t" style="left:1173px;top:12.5px;font-size:10.8px;color:#f4f4f4">ES</span>
<svg style="left:1203px;top:17px" width="10" height="7"><polygon points="0,6 10,6 5,0.5" fill="#e8eef8" stroke="#3a4a8a" stroke-width="1"/></svg>
<svg style="left:1223px;top:11px" width="17" height="18" viewBox="0 0 17 18">
 <path d="M3.5,1 H9.5 V4 H12 V15 H1 V4 H3.5 Z" fill="#fff" stroke="#111" stroke-width="1.3"/>
 <path d="M3,6 V13 M10,6 V13" stroke="#888" stroke-width="1"/>
 <path d="M7.5,6.5 H15 V10 Q15,12.5 12.5,12.5 H10 Q7.5,12.5 7.5,10 Z" fill="#fff" stroke="#111" stroke-width="1.2"/>
 <path d="M9.5,4 V6.5 M13,4 V6.5 M11.3,12.5 V17" stroke="#fff" stroke-width="1.5"/>
 <path d="M9.5,3.5 V6.5 M13,3.5 V6.5" stroke="#111" stroke-width="0.6"/>
</svg>
<svg style="left:1248px;top:11px" width="17" height="17" viewBox="0 0 17 17">
 <path d="M1,6 H4 L8.5,1.5 V15.5 L4,11 H1 Z" fill="#f4f4f4" stroke="#333" stroke-width="1"/>
 <path d="M10.5,5.5 Q12,8.5 10.5,11.5 M12.5,3.5 Q15,8.5 12.5,13.5" fill="none" stroke="#f4f4f4" stroke-width="1.4"/>
</svg>
<span class="t" style="left:1284px;top:7px;font-size:11.6px;color:#f8f8f8">12:12 a.m.</span>
<span class="t" style="left:1281px;top:24px;font-size:11.7px;color:#f8f8f8">07/02/2014</span>
</div>

</body></html>
